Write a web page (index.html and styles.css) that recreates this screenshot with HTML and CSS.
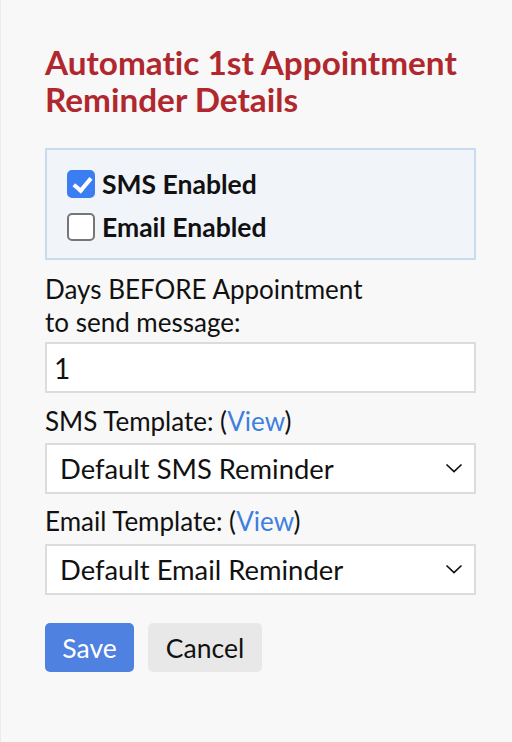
FILE: index.html
```html
<!DOCTYPE html>
<html lang="en">
<head>
<meta charset="utf-8">
<title>Reminder Details</title>
<link rel="stylesheet" href="styles.css">
</head>
<body>
<div class="panel">
  <h1 class="title">Automatic 1st Appointment Reminder Details</h1>
  <div class="toggles">
    <label class="check"><input type="checkbox" checked><span>SMS Enabled</span></label>
    <label class="check"><input type="checkbox"><span>Email Enabled</span></label>
  </div>
  <label class="field-label days-label" for="days">Days BEFORE Appointment<br>to send message:</label>
  <input id="days" class="text-input" type="text" value="1">
  <label class="field-label sms-label" for="sms">SMS Template: (<a href="#" class="link">View</a>)</label>
  <div class="select-wrap">
    <select id="sms" class="select"><option>Default SMS Reminder</option></select>
    <svg class="chev" width="18" height="10" viewBox="0 0 18 10"><path d="M1.5 1.5 L9 8.5 L16.5 1.5" fill="none" stroke="#111" stroke-width="1.7"/></svg>
  </div>
  <label class="field-label email-label" for="email">Email Template: (<a href="#" class="link">View</a>)</label>
  <div class="select-wrap email-wrap">
    <select id="email" class="select"><option>Default Email Reminder</option></select>
    <svg class="chev" width="18" height="10" viewBox="0 0 18 10"><path d="M1.5 1.5 L9 8.5 L16.5 1.5" fill="none" stroke="#111" stroke-width="1.7"/></svg>
  </div>
  <div class="actions">
    <button class="btn btn-primary" type="button">Save</button>
    <button class="btn btn-secondary" type="button">Cancel</button>
  </div>
</div>
</body>
</html>
```
FILE: styles.css
```css
html, body {
  margin: 0;
  padding: 0;
  background: #f8f8f8;
}
body {
  font-family: Lato, "Noto Sans", sans-serif;
  font-variant-ligatures: no-common-ligatures;
  color: #111;
  height: 742px;
  border-left: 1px solid #ececec;
  box-sizing: border-box;
}
.panel {
  width: 431px;
  padding: 44px 0 0 44px;
  display: flex;
  flex-direction: column;
}
.title {
  margin: 0;
  font-size: 33.3px;
  line-height: 37px;
  font-weight: 700;
  color: #b0282d;
}
.toggles {
  margin-top: 30px;
  background: #f1f5f9;
  border: 2px solid #c8dced;
  padding: 20px 20px 17px 20px;
  display: flex;
  flex-direction: column;
  gap: 15px;
}
.check {
  display: flex;
  align-items: center;
  gap: 7px;
  font-size: 26.5px;
  font-weight: 700;
  line-height: 28px;
  color: #111;
}
.check input {
  appearance: none;
  -webkit-appearance: none;
  margin: 0;
  width: 28px;
  height: 28px;
  flex: none;
  border: 2px solid #767676;
  border-radius: 5px;
  background: #fff;
  box-sizing: border-box;
  position: relative;
}
.check input:checked {
  background: #3a7ef1;
  border-color: #3a7ef1;
}
.check input:checked::after {
  content: "";
  position: absolute;
  left: 8px;
  top: 2px;
  width: 7px;
  height: 14px;
  border: solid #fff;
  border-width: 0 4px 4px 0;
  transform: rotate(40deg);
}
.field-label {
  display: block;
  font-size: 26px;
  line-height: 33px;
  color: #111;
}
.days-label {
  margin-top: 13px;
}
.sms-label {
  margin-top: 12px;
}
.email-label {
  margin-top: 11px;
}
.link {
  color: #3f7fe0;
  text-decoration: none;
}
.text-input {
  margin-top: 3px;
  height: 51px;
  box-sizing: border-box;
  border: 2px solid #dcdcdc;
  background: #fff;
  font-family: inherit;
  font-size: 28px;
  padding: 0 7px;
  color: #111;
  outline: none;
}
.select-wrap {
  position: relative;
  margin-top: 5px;
  display: flex;
}
.email-wrap {
  margin-top: 6px;
}
.select {
  appearance: none;
  -webkit-appearance: none;
  flex: 1;
  height: 51px;
  box-sizing: border-box;
  border: 2px solid #dcdcdc;
  border-radius: 0;
  background: #fff;
  font-family: inherit;
  font-size: 27.4px;
  padding: 0 13px;
  color: #111;
  outline: none;
}
.chev {
  position: absolute;
  right: 13px;
  top: 20px;
  pointer-events: none;
}
.actions {
  margin-top: 28px;
  display: flex;
  gap: 14px;
}
.btn {
  height: 49px;
  border: none;
  border-radius: 5px;
  font-family: inherit;
  font-size: 26.5px;
  padding: 0;
  cursor: pointer;
}
.btn-primary {
  background: #4f81e0;
  color: #fff;
  width: 89px;
}
.btn-secondary {
  background: #e8e8e8;
  color: #111;
  width: 114px;
}
```
